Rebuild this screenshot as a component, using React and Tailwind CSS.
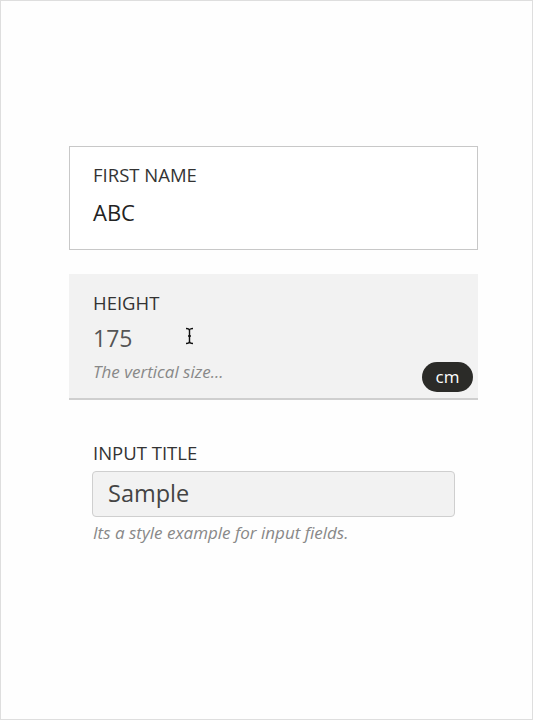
// App.jsx
// Three input field styles stacked on a plain page: outlined, filled with a unit badge, and classic.

import React from 'react';

const font = { fontFamily: '"Open Sans", "Noto Sans", sans-serif' };

// Small I-beam text cursor drawn as svg
const TextCursor = () => (
  <svg width="9" height="18" viewBox="0 0 9 18" className="absolute left-[116px] top-[53px]">
    <path d="M1 1.5 Q4.5 1.5 4.5 3.5 Q4.5 1.5 8 1.5 M4.5 3.5 V14.5 M1 16.5 Q4.5 16.5 4.5 14.5 Q4.5 16.5 8 16.5 M3 9 H6" stroke="#111" strokeWidth="1.4" fill="none" />
  </svg>
);

const App = () => {
  return (
    <div className="w-[533px] h-[720px] border border-[#dedede] bg-[#fefefe]" style={font}>
      <div className="flex flex-col pt-[145px] pl-[68px]">
        {/* Outlined field */}
        <div className="w-[409px] border border-[#c8c8c8] bg-white pt-[16px] pb-[22px] pl-[23px]">
          <div className="text-[18.5px] leading-[24px] text-[#333]">FIRST NAME</div>
          <div className="mt-[10px] text-[22px] leading-[30px] text-[#222]">ABC</div>
        </div>

        {/* Filled field with unit badge */}
        <div className="relative w-[409px] mt-[24px] bg-[#f2f2f2] border-b-2 border-[#cfcfcf] pt-[17px] pb-[15px] pl-[24px]">
          <div className="text-[18.5px] leading-[24px] text-[#333]">HEIGHT</div>
          <div className="mt-[8px] text-[23px] leading-[30px] text-[#555]">175</div>
          <TextCursor />
          <div className="mt-[8px] text-[17px] leading-[22px] italic text-[#888]">The vertical size...</div>
          <div className="absolute right-[5px] bottom-[6px] w-[51px] h-[30px] rounded-full bg-[#2b2b28] flex items-center justify-center text-[17px] text-white">
            cm
          </div>
        </div>

        {/* Classic field */}
        <div className="mt-[41px] pl-[23px]">
          <div className="pl-[1px] text-[18.5px] leading-[24px] text-[#333]">INPUT TITLE</div>
          <div className="mt-[6px] w-[363px] h-[46px] rounded-[4px] border border-[#cfcfcf] bg-[#f2f2f2] flex items-center pl-[15px] text-[23.5px] text-[#444]">
            Sample
          </div>
          <div className="mt-[5px] pl-[1px] text-[17px] leading-[22px] italic text-[#888]">Its a style example for input fields.</div>
        </div>
      </div>
    </div>
  );
};

export default App;
